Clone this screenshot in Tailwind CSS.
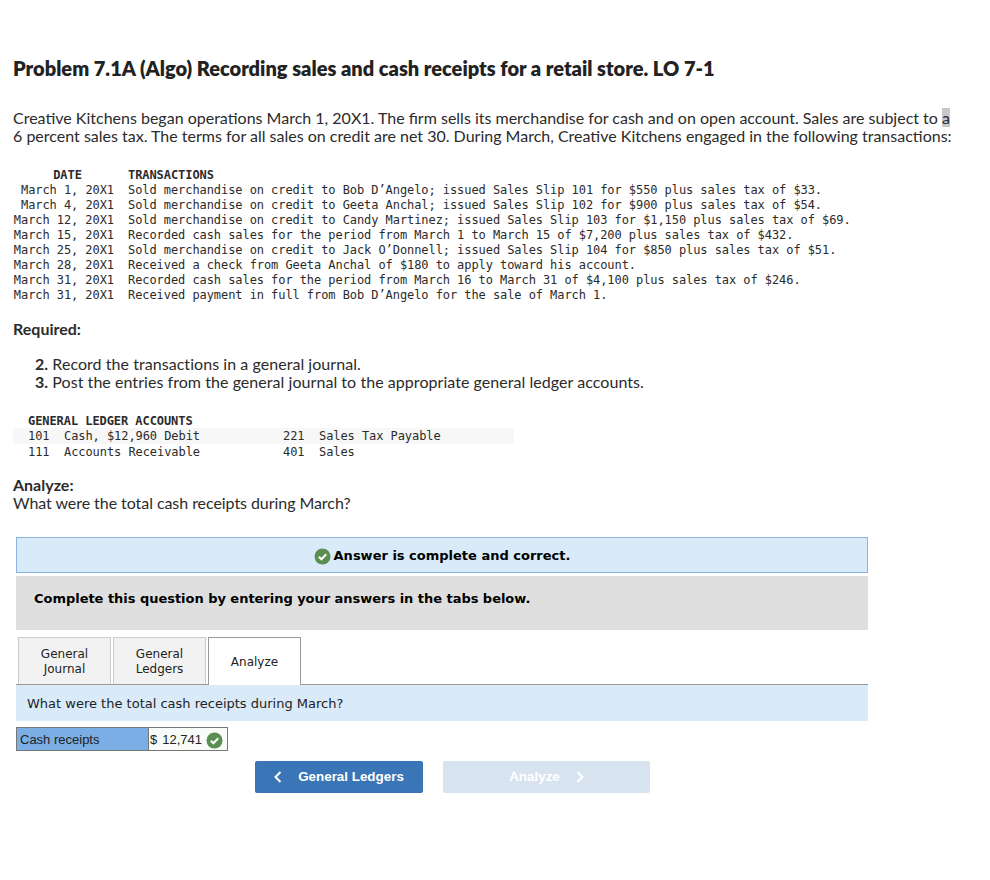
<!DOCTYPE html>
<html lang="en">

<head>
  <meta charset="UTF-8">
  <title>Problem 7.1A</title>
  <script src="https://cdn.jsdelivr.net/npm/@tailwindcss/browser@4"></script>
</head>

<body class="bg-white w-[990px] h-[880px] overflow-hidden font-['Lato',sans-serif] text-[#2b2b2b]">
  <div class="pt-[56px]">
    <!-- Question text -->
    <div class="pl-[13px]">
      <h1 class="text-[20px] leading-[24px] font-extrabold text-[#222]">Problem 7.1A (Algo) Recording sales and cash receipts for a retail store. LO 7-1</h1>
      <p class="mt-[29px] text-[16px] leading-[18px] whitespace-nowrap">Creative Kitchens began operations March 1, 20X1. The firm sells its merchandise for cash and on open account. Sales are subject to <span class="bg-[#c8c8c8]">a</span><br>6 percent sales tax. The terms for all sales on credit are net 30. During March, Creative Kitchens engaged in the following transactions:</p>

      <div class="mt-[23px] grid grid-cols-[101px_auto] justify-start gap-x-[14px] font-['DejaVu_Sans_Mono',monospace] text-[12px] leading-[15px] tracking-[-0.07px] whitespace-nowrap">
        <div class="font-bold text-center pl-[8px]">DATE</div><div class="font-bold">TRANSACTIONS</div>
        <div class="text-right">March 1, 20X1</div><div>Sold merchandise on credit to Bob D’Angelo; issued Sales Slip 101 for $550 plus sales tax of $33.</div>
        <div class="text-right">March 4, 20X1</div><div>Sold merchandise on credit to Geeta Anchal; issued Sales Slip 102 for $900 plus sales tax of $54.</div>
        <div class="text-right">March 12, 20X1</div><div>Sold merchandise on credit to Candy Martinez; issued Sales Slip 103 for $1,150 plus sales tax of $69.</div>
        <div class="text-right">March 15, 20X1</div><div>Recorded cash sales for the period from March 1 to March 15 of $7,200 plus sales tax of $432.</div>
        <div class="text-right">March 25, 20X1</div><div>Sold merchandise on credit to Jack O’Donnell; issued Sales Slip 104 for $850 plus sales tax of $51.</div>
        <div class="text-right">March 28, 20X1</div><div>Received a check from Geeta Anchal of $180 to apply toward his account.</div>
        <div class="text-right">March 31, 20X1</div><div>Recorded cash sales for the period from March 16 to March 31 of $4,100 plus sales tax of $246.</div>
        <div class="text-right">March 31, 20X1</div><div>Received payment in full from Bob D’Angelo for the sale of March 1.</div>
      </div>

      <p class="mt-[17px] text-[16px] leading-[18px] font-bold">Required:</p>
      <ol class="mt-[17px] pl-[22px] text-[16px] leading-[18px] tracking-[0.05px]">
        <li><b>2.</b> Record the transactions in a general journal.</li>
        <li><b>3.</b> Post the entries from the general journal to the appropriate general ledger accounts.</li>
      </ol>

      <!-- Ledger accounts -->
      <div class="mt-[22px] w-[501px] font-['DejaVu_Sans_Mono',monospace] text-[12px] leading-[16px] tracking-[-0.07px] whitespace-nowrap">
        <div class="pl-[15px] pt-[1px] h-[15px] leading-[15px] font-bold">GENERAL LEDGER ACCOUNTS</div>
        <div class="flex pl-[15px] bg-[#f7f7f7]"><span class="w-[36px]">101</span><span class="w-[219px]">Cash, $12,960 Debit</span><span class="w-[36px]">221</span><span>Sales Tax Payable</span></div>
        <div class="flex pl-[15px]"><span class="w-[36px]">111</span><span class="w-[219px]">Accounts Receivable</span><span class="w-[36px]">401</span><span>Sales</span></div>
      </div>

      <p class="mt-[16px] text-[16px] leading-[18px] font-bold">Analyze:</p>
      <p class="text-[16px] leading-[18px] tracking-[-0.06px]">What were the total cash receipts during March?</p>
    </div>

    <!-- Answer area -->
    <div class="mt-[25px] ml-[16px] w-[852px]">
      <div class="h-[36px] pt-[2px] bg-[#d9ebf9] border border-[#8db4de] flex items-center justify-center gap-[3px] font-['DejaVu_Sans',sans-serif] text-[13px] font-bold text-black">
        <svg class="w-[17px] h-[17px]" viewBox="0 0 17 17"><circle cx="8.5" cy="8.5" r="8" fill="#5a8f51"/><path d="M4.8 8.8l2.6 2.5 4.8-5" fill="none" stroke="#fff" stroke-width="2"/></svg>
        <span>Answer is complete and correct.</span>
      </div>
      <div class="mt-[3px] h-[54px] bg-[#dfdfdf] pl-[18px] pt-[14px] font-['DejaVu_Sans',sans-serif] text-[13px] leading-[18px] font-bold tracking-[-0.03px] text-black">Complete this question by entering your answers in the tabs below.</div>

      <!-- Tabs -->
      <div class="mt-[7px] flex h-[48px] pl-[2px] gap-[2px] border-b border-[#999] font-['DejaVu_Sans',sans-serif] text-[12px] leading-[15px] text-[#222]">
        <div class="w-[93px] h-[47px] pt-[2px] bg-[#f2f2f2] border border-b-0 border-[#ccc] flex items-center justify-center text-center">General<br>Journal</div>
        <div class="w-[93px] h-[47px] pt-[2px] bg-[#f2f2f2] border border-b-0 border-[#ccc] flex items-center justify-center text-center">General<br>Ledgers</div>
        <div class="w-[93px] h-[48px] pt-[2px] bg-white border border-b-0 border-[#999] flex items-center justify-center text-center relative">Analyze</div>
      </div>
      <div class="h-[36px] pt-[2px] bg-[#d9ebf9] pl-[11px] flex items-center font-['DejaVu_Sans',sans-serif] text-[13px] text-[#222]">What were the total cash receipts during March?</div>

      <!-- Answer row -->
      <div class="mt-[6px] flex w-[212px] h-[24px] border border-[#777] font-['Liberation_Sans',sans-serif] text-[13px] text-[#222]">
        <div class="w-[132px] pt-[2px] bg-[#7aaee4] border-r border-[#777] pl-[3px] flex items-center">Cash receipts</div>
        <div class="flex-1 pt-[2px] bg-[#f8fbf8] pl-[1px] flex items-center">$<span class="ml-[5px]">12,741</span>
          <svg class="ml-[4px] w-[17px] h-[17px]" viewBox="0 0 17 17"><circle cx="8.5" cy="8.5" r="8" fill="#5a8f51"/><path d="M4.8 8.8l2.6 2.5 4.8-5" fill="none" stroke="#fff" stroke-width="2"/></svg>
        </div>
      </div>

      <!-- Prev / next -->
      <div class="mt-[10px] ml-[239px] flex gap-[20px] font-['Liberation_Sans',sans-serif] text-[13.4px] font-bold text-white">
        <div class="w-[168px] h-[32px] bg-[#3a75b8] rounded-[2px] flex items-center justify-center gap-[16px]">
          <svg class="w-[8px] h-[12px]" viewBox="0 0 8 12"><path d="M6.5 1L1.5 6l5 5" fill="none" stroke="#fff" stroke-width="2"/></svg>
          <span>General Ledgers</span>
        </div>
        <div class="w-[207px] h-[32px] bg-[#d8e3f0] rounded-[2px] flex items-center justify-center gap-[16px]">
          <span>Analyze</span>
          <svg class="w-[8px] h-[12px]" viewBox="0 0 8 12"><path d="M1.5 1l5 5-5 5" fill="none" stroke="#fff" stroke-width="2"/></svg>
        </div>
      </div>
    </div>
  </div>
</body>

</html>
